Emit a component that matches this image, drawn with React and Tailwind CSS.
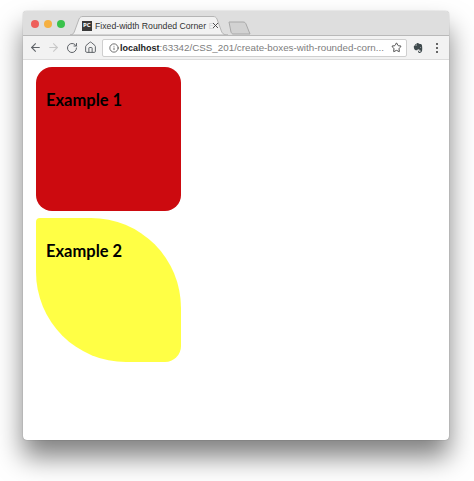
import { ArrowLeft, ArrowRight, RotateCw, Home, Info, Star, X } from 'lucide-react';
import { SiEvernote } from 'react-icons/si';

const sans = "font-['Liberation_Sans',Arial,sans-serif]";

const TrafficLights = () => (
  <div className="flex gap-[5px] pl-[8px] pt-[9px] w-[47px] shrink-0">
    <span className="w-[8px] h-[8px] rounded-full bg-[#ee5f5b]" />
    <span className="w-[8px] h-[8px] rounded-full bg-[#f5b041]" />
    <span className="w-[8px] h-[8px] rounded-full bg-[#39c24b]" />
  </div>
);

const Tab = () => (
  <div className="relative w-[158px] h-[19px] mt-[5px] shrink-0 flex items-center pl-[12px]">
    {/* tab outline */}
    <svg className="absolute inset-0" width="158" height="19" viewBox="0 0 158 19">
      <path d="M0 19 C3 19 4 17 5 14 L9 3 C10 1 11 0.5 13 0.5 L143 0.5 C145 0.5 146 1 147 3 L151 14 C152 17 153 19 158 19 Z" fill="#f2f2f2" stroke="#b5b5b5" />
    </svg>
    <span className="relative w-[10px] h-[10px] bg-[#3a3a3a] text-white text-[6px] leading-[8px] font-bold pl-[1px] shrink-0">
      PC
    </span>
    <span className={`relative ml-[3px] w-[116px] whitespace-nowrap text-[8.7px] leading-[12px] text-[#333] ${sans}`}>
      Fixed-width Rounded Corner <span className="text-[#d4d4d4]">E</span>
    </span>
    <X className="relative text-[#444]" size={9} strokeWidth={2.5} />
  </div>
);

const InactiveTab = () => (
  <svg className="mt-[10px] shrink-0" width="23" height="14" viewBox="0 0 23 14">
    <path d="M1 1 L15 1 C17 1 17.5 2 18 3 L22 13 L5 13 C4 13 3.5 12 3 11 Z" fill="#d2d2d2" stroke="#a8a8a8" />
  </svg>
);

const Toolbar = () => (
  <div className="h-[25px] bg-[#f2f2f2] border-t border-[#b9b9b9] border-b-[#dcdcdc] border-b flex items-center pl-[6px] shrink-0">
    <ArrowLeft size={13} strokeWidth={2} className="text-[#5f6368]" />
    <ArrowRight size={13} strokeWidth={2} className="ml-[5px] text-[#c8c8c8]" />
    <RotateCw size={12} strokeWidth={2} className="ml-[6px] text-[#5f6368]" />
    <Home size={13} strokeWidth={1.8} className="ml-[6px] text-[#5f6368]" />
    <div className="ml-[5px] w-[305px] h-[18px] bg-white border border-[#cfcfcf] rounded-[2px] flex items-center pl-[6px] pr-[4px]">
      <Info size={10} strokeWidth={1.8} className="text-[#444] shrink-0" />
      <span className={`ml-[1px] flex-1 whitespace-nowrap text-[9.8px] leading-[14px] text-[#7d7d7d] ${sans}`}>
        <span className="text-[#222] font-bold text-[9px]">localhost</span>:63342/CSS_201/create-boxes-with-rounded-corn...
      </span>
      <Star size={11} strokeWidth={2} className="text-[#444] shrink-0" />
    </div>
    <SiEvernote size={10} className="ml-[6px] text-[#3f4a4d]" />
    <div className="ml-[13px] flex flex-col gap-[2px]">
      <span className="w-[2px] h-[2px] bg-[#666]" />
      <span className="w-[2px] h-[2px] bg-[#666]" />
      <span className="w-[2px] h-[2px] bg-[#666]" />
    </div>
  </div>
);

const Box = ({ className, children }) => (
  <div className={`w-[145px] h-[144px] pl-[10px] pt-[22px] ${className}`}>
    <h2 className="font-['Lato',sans-serif] font-bold text-[16.5px] leading-[22px] text-black whitespace-nowrap">
      {children}
    </h2>
  </div>
);

export default function App() {
  return (
    <div className="w-[474px] h-[481px] bg-white pt-[11px] pl-[23px] overflow-hidden">
      <div className="w-[426px] h-[429px] bg-white rounded-[4px] overflow-hidden flex flex-col shadow-[0_0_1px_rgba(0,0,0,0.5),0_17px_27px_rgba(0,0,0,0.5)]">
        <div className="h-[24px] bg-[#dedede] flex shrink-0">
          <TrafficLights />
          <Tab />
          <InactiveTab />
        </div>
        <Toolbar />
        <div className="flex flex-col gap-[7px] pl-[13px] pt-[7px]">
          <Box className="bg-[#cc0a0f] rounded-[16px]">Example 1</Box>
          <Box className="bg-[#ffff45] rounded-tl-[4px] rounded-tr-[90px] rounded-br-[16px] rounded-bl-[90px]">Example 2</Box>
        </div>
      </div>
    </div>
  );
}
